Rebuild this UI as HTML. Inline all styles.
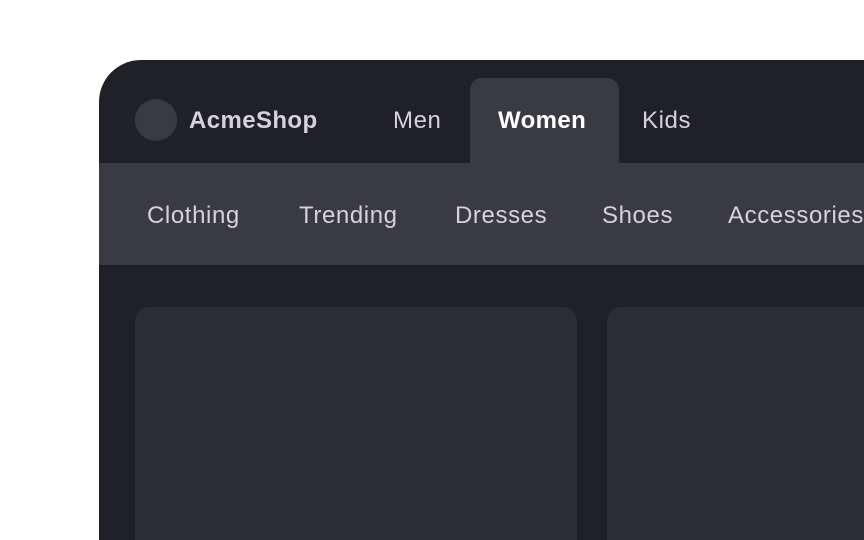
<!DOCTYPE html>
<html><head><style>
html,body{margin:0;width:864px;height:540px;overflow:hidden}
body{background:#fff;font-family:"Liberation Sans",sans-serif;position:relative}
.win{position:absolute;left:99px;top:60px;width:765px;height:480px;background:#202028;border-radius:42px 0 0 0;overflow:hidden}
.circ{position:absolute;left:36px;top:39px;width:42px;height:42px;border-radius:50%;background:#3a3a42}
.t{position:absolute;font-size:24px;letter-spacing:0.6px;color:#d4d4d8;white-space:nowrap;line-height:1}
.tab{position:absolute;left:371px;top:18px;width:149px;height:90px;background:#3a3a42;border-radius:12px 12px 0 0}
.sub{position:absolute;left:0;top:103px;width:765px;height:102px;background:#3a3a42;overflow:hidden}
.card{position:absolute;top:247px;height:233px;background:#2c2c34;border-radius:14px 14px 0 0}
</style></head><body>
<div class="win">
<div class="circ"></div>
<div class="tab"></div>
<div class="t" style="left:90px;top:49px;font-weight:bold;letter-spacing:0.4px">AcmeShop</div>
<div class="t" style="left:294px;top:49px">Men</div>
<div class="t" style="left:399px;top:49px;font-weight:bold;color:#fff;letter-spacing:0.4px">Women</div>
<div class="t" style="left:543px;top:49px">Kids</div>
<div class="sub">
<div class="t" style="left:48px;top:41px">Clothing</div>
<div class="t" style="left:200px;top:41px">Trending</div>
<div class="t" style="left:356px;top:41px">Dresses</div>
<div class="t" style="left:503px;top:41px">Shoes</div>
<div class="t" style="left:629px;top:41px">Accessories</div>
</div>
<div class="card" style="left:36px;width:442px"></div>
<div class="card" style="left:508px;width:257px;border-radius:14px 0 0 0"></div>
</div>
</body></html>
